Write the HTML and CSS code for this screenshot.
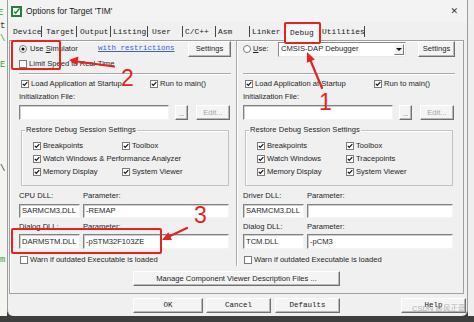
FILE: index.html
```html
<!DOCTYPE html>
<html>
<head>
<meta charset="utf-8">
<link rel="stylesheet" href="styles.css">
</head>
<body>
<div class="screen">
<pre class="strip"><span class="g">E</span>
t
<span class="g">\</span>

<span class="g">E</span>







\






<span class="g">m</span>




e
e</pre>
  <div class="dialog">
    <div class="titlebar">
      <svg class="app-icon" viewBox="0 0 11 11"><rect x="0" y="0" width="11" height="11" fill="#23803a"/><rect x="2" y="2" width="7" height="7" fill="#fff"/><path d="M3.2 5.6 4.8 7.2 8.6 2.4" fill="none" stroke="#23803a" stroke-width="1.5"/></svg>
      <span class="title">Options for Target 'TIM'</span>
      <span class="close">✕</span>
    </div>
    <div class="tabs">
      <span class="tab w-device">Device</span>
      <span class="tab w-target">Target</span>
      <span class="tab w-output">Output</span>
      <span class="tab w-listing">Listing</span>
      <span class="tab w-user">User</span>
      <span class="tab w-cpp">C/C++</span>
      <span class="tab w-asm">Asm</span>
      <span class="tab w-linker nosep">Linker</span>
      <span class="tab-active">Debug</span>
      <span class="tab w-util">Utilities</span>
    </div>
    <div class="page">
      <div class="cols">
        <div class="col">
          <div class="row r1">
            <svg class="box" viewBox="0 0 8 8"><circle cx="4" cy="4" r="3.5" fill="#fff" stroke="#7a7a7a"/><circle cx="4" cy="4" r="1.6" fill="#111"/></svg>
            <span class="lbl-sim">Use <u>S</u>imulator</span>
            <span class="link">with restrictions</span>
            <span class="btn set-l">Settings</span>
          </div>
          <div class="row r2">
            <span class="opt"><svg class="box" viewBox="0 0 8 8"><rect x=".5" y=".5" width="7" height="7" fill="#fff" stroke="#7a7a7a"/></svg>Limit Speed to Real-Time</span>
          </div>
          <div class="sep"></div>
          <div class="row r3">
            <span class="opt w129"><svg class="box" viewBox="0 0 8 8"><rect x=".5" y=".5" width="7" height="7" fill="#fff" stroke="#7a7a7a"/><path d="M1.8 3.8 3.3 5.4 6.3 2.2" fill="none" stroke="#111" stroke-width="1.2"/></svg>Load Application at Startup</span>
            <span class="opt"><svg class="box" viewBox="0 0 8 8"><rect x=".5" y=".5" width="7" height="7" fill="#fff" stroke="#7a7a7a"/><path d="M1.8 3.8 3.3 5.4 6.3 2.2" fill="none" stroke="#111" stroke-width="1.2"/></svg>Run to main()</span>
          </div>
          <div class="row r4">Initialization File:</div>
          <div class="row r5">
            <span class="field init"></span>
            <span class="btn dots">...</span>
            <span class="btn edit disabled">Edit...</span>
          </div>
          <fieldset class="group">
            <legend>Restore Debug Session Settings</legend>
            <div class="grid-opts">
              <span class="opt"><svg class="box" viewBox="0 0 8 8"><rect x=".5" y=".5" width="7" height="7" fill="#fff" stroke="#7a7a7a"/><path d="M1.8 3.8 3.3 5.4 6.3 2.2" fill="none" stroke="#111" stroke-width="1.2"/></svg>Breakpoints</span>
              <span class="opt"><svg class="box" viewBox="0 0 8 8"><rect x=".5" y=".5" width="7" height="7" fill="#fff" stroke="#7a7a7a"/><path d="M1.8 3.8 3.3 5.4 6.3 2.2" fill="none" stroke="#111" stroke-width="1.2"/></svg>Toolbox</span>
              <span class="opt span2"><svg class="box" viewBox="0 0 8 8"><rect x=".5" y=".5" width="7" height="7" fill="#fff" stroke="#7a7a7a"/><path d="M1.8 3.8 3.3 5.4 6.3 2.2" fill="none" stroke="#111" stroke-width="1.2"/></svg>Watch Windows &amp; Performance Analyzer</span>
              <span class="opt"><svg class="box" viewBox="0 0 8 8"><rect x=".5" y=".5" width="7" height="7" fill="#fff" stroke="#7a7a7a"/><path d="M1.8 3.8 3.3 5.4 6.3 2.2" fill="none" stroke="#111" stroke-width="1.2"/></svg>Memory Display</span>
              <span class="opt"><svg class="box" viewBox="0 0 8 8"><rect x=".5" y=".5" width="7" height="7" fill="#fff" stroke="#7a7a7a"/><path d="M1.8 3.8 3.3 5.4 6.3 2.2" fill="none" stroke="#111" stroke-width="1.2"/></svg>System Viewer</span>
            </div>
          </fieldset>
          <div class="dll lab1"><span>CPU DLL:</span><span>Parameter:</span></div>
          <div class="dll in1"><span class="field">SARMCM3.DLL</span><span class="field">-REMAP</span></div>
          <div class="dll lab2"><span>Dialog DLL:</span><span>Parameter:</span></div>
          <div class="dll in2"><span class="field">DARMSTM.DLL</span><span class="field">-pSTM32F103ZE</span></div>
          <div class="row warn">
            <span class="opt"><svg class="box" viewBox="0 0 8 8"><rect x=".5" y=".5" width="7" height="7" fill="#fff" stroke="#7a7a7a"/></svg>Warn if outdated Executable is loaded</span>
          </div>
        </div>
        <div class="divider"></div>
        <div class="col">
          <div class="row r1">
            <svg class="box" viewBox="0 0 8 8"><circle cx="4" cy="4" r="3.5" fill="#fff" stroke="#7a7a7a"/></svg>
            <span class="lbl-use"><u>U</u>se:</span>
            <span class="select">CMSIS-DAP Debugger<span class="drop"><span class="tri"></span></span></span>
            <span class="btn set-r">Settings</span>
          </div>
          <div class="row r2"></div>
          <div class="sep"></div>
          <div class="row r3">
            <span class="opt w129"><svg class="box" viewBox="0 0 8 8"><rect x=".5" y=".5" width="7" height="7" fill="#fff" stroke="#7a7a7a"/><path d="M1.8 3.8 3.3 5.4 6.3 2.2" fill="none" stroke="#111" stroke-width="1.2"/></svg>Load Application at Startup</span>
            <span class="opt"><svg class="box" viewBox="0 0 8 8"><rect x=".5" y=".5" width="7" height="7" fill="#fff" stroke="#7a7a7a"/><path d="M1.8 3.8 3.3 5.4 6.3 2.2" fill="none" stroke="#111" stroke-width="1.2"/></svg>Run to main()</span>
          </div>
          <div class="row r4">Initialization File:</div>
          <div class="row r5">
            <span class="field init"></span>
            <span class="btn dots">...</span>
            <span class="btn edit disabled">Edit...</span>
          </div>
          <fieldset class="group">
            <legend>Restore Debug Session Settings</legend>
            <div class="grid-opts">
              <span class="opt"><svg class="box" viewBox="0 0 8 8"><rect x=".5" y=".5" width="7" height="7" fill="#fff" stroke="#7a7a7a"/><path d="M1.8 3.8 3.3 5.4 6.3 2.2" fill="none" stroke="#111" stroke-width="1.2"/></svg>Breakpoints</span>
              <span class="opt"><svg class="box" viewBox="0 0 8 8"><rect x=".5" y=".5" width="7" height="7" fill="#fff" stroke="#7a7a7a"/><path d="M1.8 3.8 3.3 5.4 6.3 2.2" fill="none" stroke="#111" stroke-width="1.2"/></svg>Toolbox</span>
              <span class="opt"><svg class="box" viewBox="0 0 8 8"><rect x=".5" y=".5" width="7" height="7" fill="#fff" stroke="#7a7a7a"/><path d="M1.8 3.8 3.3 5.4 6.3 2.2" fill="none" stroke="#111" stroke-width="1.2"/></svg>Watch Windows</span>
              <span class="opt"><svg class="box" viewBox="0 0 8 8"><rect x=".5" y=".5" width="7" height="7" fill="#fff" stroke="#7a7a7a"/><path d="M1.8 3.8 3.3 5.4 6.3 2.2" fill="none" stroke="#111" stroke-width="1.2"/></svg>Tracepoints</span>
              <span class="opt"><svg class="box" viewBox="0 0 8 8"><rect x=".5" y=".5" width="7" height="7" fill="#fff" stroke="#7a7a7a"/><path d="M1.8 3.8 3.3 5.4 6.3 2.2" fill="none" stroke="#111" stroke-width="1.2"/></svg>Memory Display</span>
              <span class="opt"><svg class="box" viewBox="0 0 8 8"><rect x=".5" y=".5" width="7" height="7" fill="#fff" stroke="#7a7a7a"/><path d="M1.8 3.8 3.3 5.4 6.3 2.2" fill="none" stroke="#111" stroke-width="1.2"/></svg>System Viewer</span>
            </div>
          </fieldset>
          <div class="dll lab1"><span>Driver DLL:</span><span>Parameter:</span></div>
          <div class="dll in1"><span class="field">SARMCM3.DLL</span><span class="field"></span></div>
          <div class="dll lab2"><span>Dialog DLL:</span><span>Parameter:</span></div>
          <div class="dll in2"><span class="field">TCM.DLL</span><span class="field">-pCM3</span></div>
          <div class="row warn">
            <span class="opt"><svg class="box" viewBox="0 0 8 8"><rect x=".5" y=".5" width="7" height="7" fill="#fff" stroke="#7a7a7a"/></svg>Warn if outdated Executable is loaded</span>
          </div>
        </div>
      </div>
      <div class="manage-row"><span class="btn manage">Manage Component Viewer Description Files ...</span></div>
    </div>
    <div class="footer">
      <span class="btn mono b-ok">OK</span>
      <span class="btn mono b-cancel">Cancel</span>
      <span class="btn mono b-def">Defaults</span>
      <span class="btn mono b-help">Help</span>
    </div>
  </div>
  <div class="edge"></div>
</div>
<div class="band"></div>

<div class="mark box-sim"></div>
<div class="mark box-debug"></div>
<div class="mark box-dll"></div>
<span class="num n2">2</span>
<span class="num n1">1</span>
<span class="num n3">3</span>
<svg class="arrows" viewBox="0 0 474 322">
  <path d="M114 66.5 77 61.5" stroke="#e5231f" stroke-width="2.2" fill="none" stroke-linecap="round"/>
  <polygon points="69,60 78.4,56.6 77.4,65.6" fill="#e5231f"/>
  <path d="M322 88 310.5 60.5" stroke="#e5231f" stroke-width="2.2" fill="none" stroke-linecap="round"/>
  <polygon points="307,52 314.8,59.6 306.9,62.8" fill="#e5231f"/>
  <path d="M187 228 168.5 236.8" stroke="#e5231f" stroke-width="2.2" fill="none" stroke-linecap="round"/>
  <polygon points="162,240 171.9,240 168.3,232.3" fill="#e5231f"/>
</svg>
<span class="watermark">CSDN @风正豪</span>
</body>
</html>
```
FILE: styles.css
```css
* { box-sizing: border-box; }
html, body { margin: 0; padding: 0; }
body {
  width: 474px; height: 322px; overflow: hidden; position: relative;
  background: #3e3e3e;
  font-family: "Liberation Sans", Arial, sans-serif;
  font-size: 7.6px; line-height: 1; color: #1e1e1e;
}
.screen { display: flex; height: 316px; }
.strip {
  margin: 0; width: 7px; flex: none; overflow: hidden;
  background: #f3f5f0; padding-top: 6.5px;
  font-family: "Liberation Mono", monospace; font-size: 9px; line-height: 13px;
  color: #333; text-indent: -2px;
}
.strip .g { color: #3f9a3f; }
.edge { flex: 1; background: #efefef; }

.dialog {
  width: 461px; flex: none; background: #f0f0f0;
  border-left: 1px solid #9c9c9c; border-right: 1px solid #9c9c9c;
  border-radius: 0 0 6px 6px;
  display: flex; flex-direction: column;
}
.titlebar {
  height: 22px; display: flex; align-items: center;
  padding-left: 3px; background: #f3f3f3;
}
.app-icon { width: 11px; height: 11px; }
.title { margin-left: 4px; font-size: 8.4px; color: #1a1a1a; }
.close {
  margin-left: auto; margin-right: 9px;
  font-family: "DejaVu Sans", sans-serif; font-size: 9px; color: #333;
}

.tabs {
  height: 18px; display: flex; align-items: flex-end;
  font-family: "Liberation Mono", monospace; font-size: 7.9px; color: #222;
}
.tab {
  height: 11px; line-height: 11px; margin-bottom: 3px;
  border-right: 1px solid #444; white-space: nowrap; flex: none;
}
.tab.nosep { border-right: none; }
.w-device { width: 34px; padding-left: 5px; }
.w-target { width: 35px; padding-left: 4px; }
.w-output { width: 34px; padding-left: 3px; }
.w-listing { width: 37px; padding-left: 2px; }
.w-user { width: 35px; padding-left: 4px; }
.w-cpp { width: 33px; padding-left: 2px; }
.w-asm { width: 34px; padding-left: 2px; }
.w-linker { width: 34px; padding-left: 2px; }
.w-util { width: 44px; padding-left: 1px; }
.tab-active {
  position: relative; z-index: 1;
  width: 37px; height: 18px; margin-bottom: -1px; flex: none;
  padding: 3px 0 0 5px; line-height: 11px;
  background: #f6f6f6; border: 1px solid #a3a3a3; border-bottom: none;
}

.page {
  margin-left: 1px; width: 455px; height: 254px;
  border: 1px solid #a0a0a0; box-shadow: inset 1px 1px 0 #fff;
  padding-left: 9px;
}
.cols { display: flex; }
.col { width: 212px; display: flex; flex-direction: column; }
.divider {
  width: 2px; margin: 0 5px; border-left: 1px solid #a9a9a9; border-right: 1px solid #fff;
}
.row { display: flex; align-items: center; }
.box { width: 8px; height: 8px; flex: none; display: block; }
.opt { display: inline-flex; align-items: center; gap: 2px; white-space: nowrap; }
.w129 { width: 129px; flex: none; }

.r1 { height: 16px; }
.r1 .box { margin-right: 3px; }
.lbl-sim { width: 68px; flex: none; }
.lbl-use { width: 25px; flex: none; margin-left: -1px; }
.link {
  font-family: "Liberation Mono", monospace; font-size: 7.5px;
  color: #3a5fcd; text-decoration: underline;
}
.btn {
  display: inline-flex; align-items: center; justify-content: center;
  background: #f4f4f4; white-space: nowrap;
  border: 1px solid; border-color: #ffffff #6f6f6f #6f6f6f #ffffff;
  box-shadow: inset -1px -1px 0 #b8b8b8;
}
.set-l { margin-left: auto; width: 43px; height: 16px; }
.set-r { margin-left: auto; width: 37px; height: 16px; }
.select {
  width: 128px; height: 15px; display: flex; align-items: center;
  padding-left: 2px; background: #fff;
  border: 1px solid; border-color: #8a8a8a #e9e9e9 #e9e9e9 #8a8a8a;
}
.drop {
  margin-left: auto; margin-right: 1px; width: 10px; height: 11px;
  display: flex; align-items: center; justify-content: center;
  background: #f2f2f2; border: 1px solid; border-color: #fff #777 #777 #fff;
}
.tri { width: 0; height: 0; border-left: 3px solid transparent; border-right: 3px solid transparent; border-top: 3px solid #111; }

.r2 { height: 13px; }
.sep { margin-top: 3px; height: 2px; border-top: 1px solid #a9a9a9; border-bottom: 1px solid #fff; }
.r3 { margin-top: 3px; height: 12px; padding-left: 2px; }
.r4 { height: 13px; }
.r5 { margin-top: 2px; height: 15px; }
.field {
  display: flex; align-items: center; height: 100%;
  background: #fff; padding-left: 2px; white-space: nowrap; overflow: hidden;
  border: 1px solid; border-color: #808080 #f4f4f4 #f4f4f4 #808080;
  box-shadow: inset 1px 1px 0 #cfcfcf;
}
.init { width: 150px; }
.dots { margin-left: 6px; width: 13px; height: 15px; align-items: flex-end; padding-bottom: 2px; font-size: 6px; }
.edit { margin-left: 8px; width: 34px; height: 15px; }
.disabled { color: #a8a8a8; }

.group {
  margin: 5px 2px 0; padding: 0;
  border: 1px solid #c2c2c2; box-shadow: inset 1px 1px 0 #fff;
}
.group legend { margin-left: 3px; padding: 0 1px; line-height: 10px; }
.grid-opts {
  display: grid; grid-template-columns: 89px auto; grid-auto-rows: 13px;
  align-items: center; padding: 4px 0 7px 11px;
}
.span2 { grid-column: 1 / 3; }

.dll { display: grid; grid-template-columns: 61px 146px; column-gap: 3px; }
.lab1 { margin-top: 4px; height: 12px; align-items: center; }
.in1 { margin-top: 2px; height: 14px; }
.lab2 { margin-top: 3px; height: 12px; align-items: center; }
.in2 { margin-top: 1px; height: 15px; }
.dll span:not(.field) { display: flex; align-items: center; }
.warn { margin-top: 5px; height: 12px; padding-left: 1px; }

.manage-row { display: flex; margin-top: 5px; padding-left: 114px; }
.manage { width: 207px; height: 15px; }

.footer { display: flex; padding: 4px 0 0 125px; }
.mono { font-family: "Liberation Mono", monospace; font-size: 7.5px; color: #222; height: 15px; }
.b-ok { width: 70px; }
.b-cancel { width: 65px; margin-left: 3px; }
.b-def { width: 65px; margin-left: 4px; }
.b-help { width: 65px; margin-left: 61px; }

.band { height: 6px; background: #3e3e3e; }

.mark { position: absolute; border: 2px solid #e5231f; border-radius: 2px; }
.box-sim { left: 11px; top: 40px; width: 50px; height: 30px; }
.box-debug { left: 284px; top: 22px; width: 37px; height: 22px; z-index: 2; }
.box-dll { left: 11px; top: 228px; width: 151px; height: 26px; }
.num {
  position: absolute; color: #e5231f; font-size: 23px; line-height: 23px;
  font-family: "Liberation Sans", Arial, sans-serif;
}
.n2 { left: 121px; top: 67px; }
.n1 { left: 319px; top: 91px; }
.n3 { left: 194px; top: 204px; }
.arrows { position: absolute; left: 0; top: 0; width: 474px; height: 322px; z-index: 3; }
.watermark {
  position: absolute; left: 412px; top: 305px;
  font-family: "Liberation Sans", "Noto Sans CJK SC", sans-serif; font-size: 7.5px;
  color: rgba(150, 150, 150, 0.75); z-index: 4;
}
```
